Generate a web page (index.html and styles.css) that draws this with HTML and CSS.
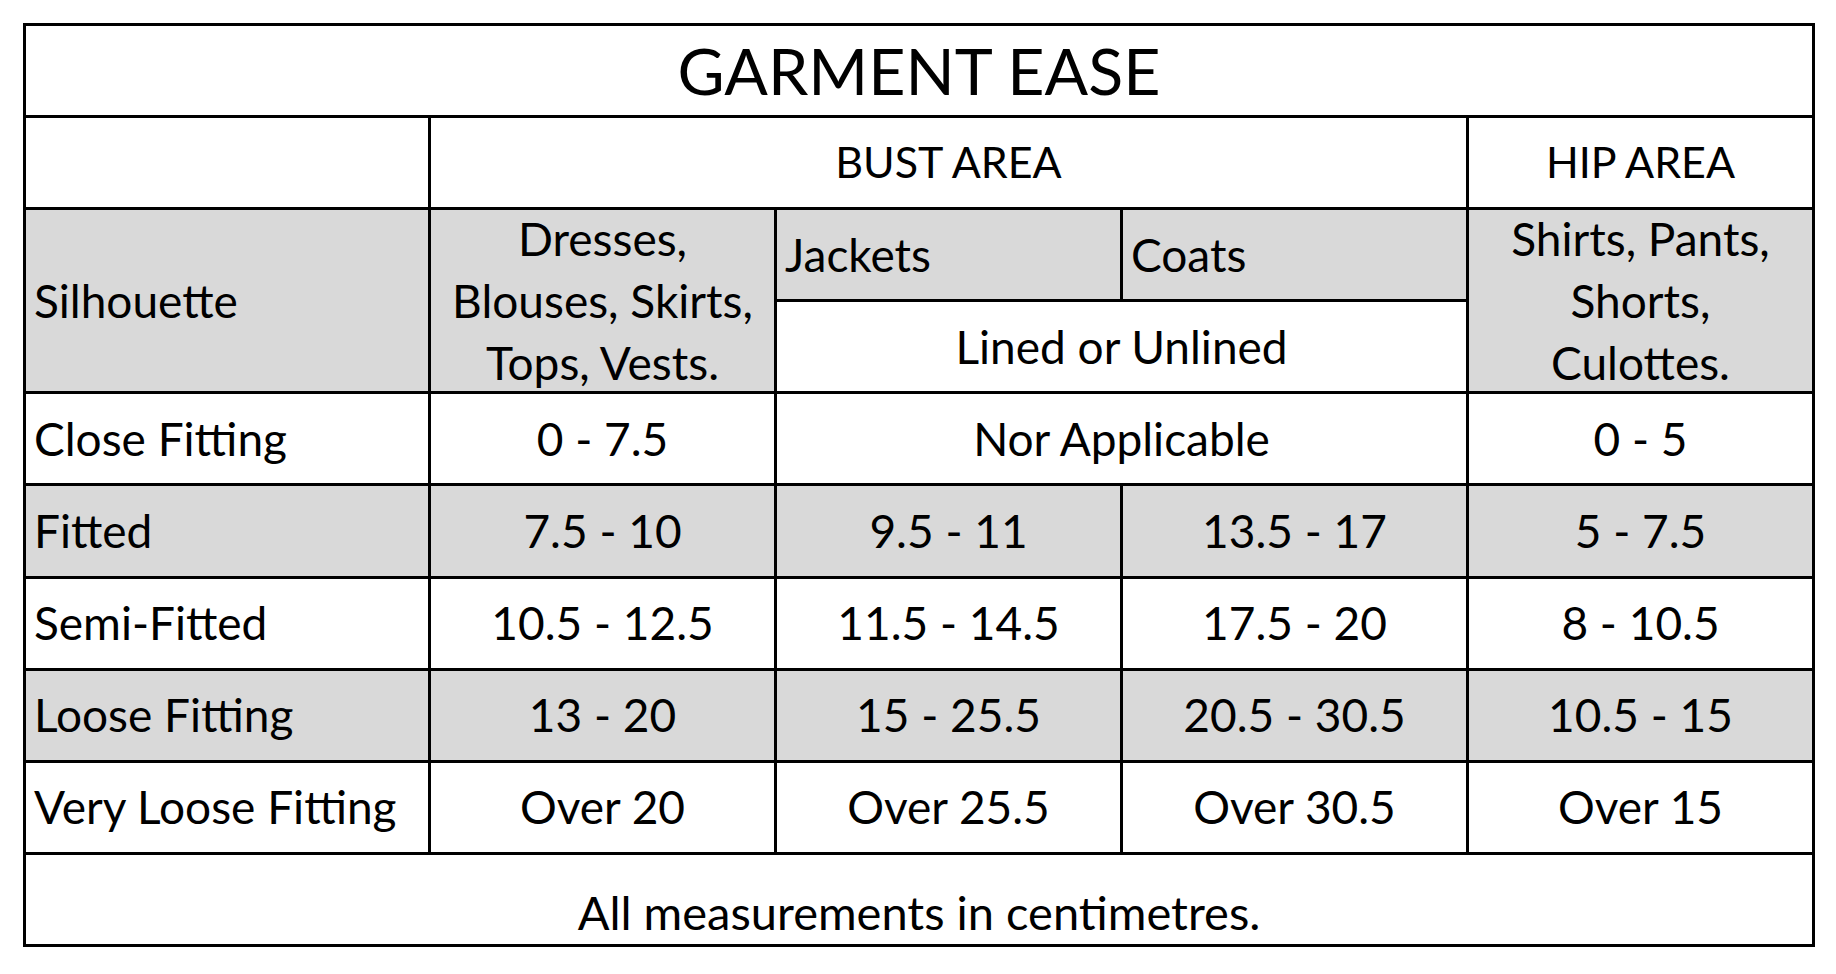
FILE: index.html
```html
<!DOCTYPE html>
<html lang="en">
<head>
<meta charset="utf-8">
<title>Garment Ease</title>
<link rel="stylesheet" href="styles.css">
</head>
<body>
<div class="sheet">
  <div class="cell title">GARMENT EASE</div>
  <div class="cell"></div>
  <div class="cell span3 caps">BUST AREA</div>
  <div class="cell caps">HIP AREA</div>

  <div class="cell gray left rows2">Silhouette</div>
  <div class="cell gray rows2 multi">Dresses,<br>Blouses, Skirts,<br>Tops, Vests.</div>
  <div class="cell gray left">Jackets</div>
  <div class="cell gray left">Coats</div>
  <div class="cell gray rows2 multi">Shirts, Pants,<br>Shorts,<br>Culottes.</div>
  <div class="cell span2">Lined or Unlined</div>

  <div class="cell left">Close Fitting</div>
  <div class="cell">0 - 7.5</div>
  <div class="cell span2">Nor Applicable</div>
  <div class="cell">0 - 5</div>

  <div class="cell gray left">Fitted</div>
  <div class="cell gray">7.5 - 10</div>
  <div class="cell gray">9.5 - 11</div>
  <div class="cell gray">13.5 - 17</div>
  <div class="cell gray">5 - 7.5</div>

  <div class="cell left">Semi-Fitted</div>
  <div class="cell">10.5 - 12.5</div>
  <div class="cell">11.5 - 14.5</div>
  <div class="cell">17.5 - 20</div>
  <div class="cell">8 - 10.5</div>

  <div class="cell gray left">Loose Fitting</div>
  <div class="cell gray">13 - 20</div>
  <div class="cell gray">15 - 25.5</div>
  <div class="cell gray">20.5 - 30.5</div>
  <div class="cell gray">10.5 - 15</div>

  <div class="cell left">Very Loose Fitting</div>
  <div class="cell">Over 20</div>
  <div class="cell">Over 25.5</div>
  <div class="cell">Over 30.5</div>
  <div class="cell">Over 15</div>

  <div class="cell footer">All measurements in centimetres.</div>
</div>
</body>
</html>
```

FILE: styles.css
```css
html, body {
  margin: 0;
  padding: 0;
  background: #ffffff;
}

body {
  padding: 23px;
  font-family: Lato, "Liberation Sans", sans-serif;
  color: #000;
}

.sheet {
  display: grid;
  grid-template-columns: 402px repeat(4, 1fr);
  grid-template-rows: repeat(10, 1fr);
  gap: 3px;
  width: 1792px;
  height: 924px;
  box-sizing: border-box;
  border: 3px solid #000;
  background: #000;
}

.cell {
  background: #ffffff;
  display: flex;
  align-items: center;
  justify-content: center;
  text-align: center;
  padding: 0 6px;
  font-size: 46px;
  line-height: 1.22;
  white-space: nowrap;
}

.gray {
  background: #d9d9d9;
}

.left {
  justify-content: flex-start;
  text-align: left;
  padding-left: 8px;
}

.title {
  grid-column: 1 / -1;
  font-size: 64.5px;
}

.caps {
  font-size: 43px;
}

.footer {
  grid-column: 1 / -1;
  padding-top: 26px;
  font-size: 47px;
}

.span3 {
  grid-column: span 3;
}

.span2 {
  grid-column: span 2;
}

.rows2 {
  grid-row: span 2;
}

.multi {
  line-height: 62px;
}
```
